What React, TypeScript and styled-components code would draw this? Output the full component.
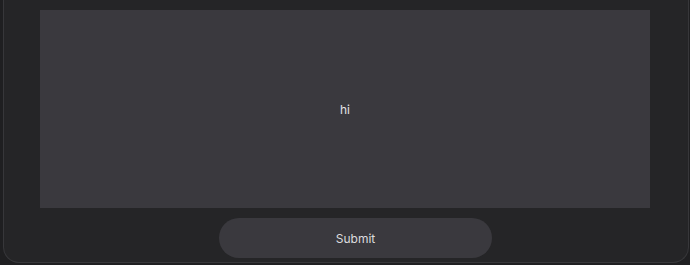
import React from "react";
import styled, { createGlobalStyle } from "styled-components";

const GlobalStyle = createGlobalStyle`
  html, body {
    margin: 0;
    padding: 0;
    background: #1f1f21;
    font-family: "Inter", "Noto Sans", sans-serif;
  }
`;

const Page = styled.div`
  width: 690px;
  height: 265px;
  overflow: hidden;
  padding: 0 1px 2px 3px;
  box-sizing: border-box;
`;

const Card = styled.div`
  background: #252527;
  border: 1px solid #37373a;
  border-top: none;
  border-radius: 0 0 16px 16px;
  padding: 10px 38px 6px 36px;
  height: 263px;
  box-sizing: border-box;
  display: flex;
  flex-direction: column;
  gap: 10px;
`;

const MessageBox = styled.div`
  height: 198px;
  flex-shrink: 0;
  background: #3a393e;
  display: flex;
  align-items: center;
  justify-content: center;
  color: #e4e4e6;
  font-size: 12px;
`;

const SubmitButton = styled.button`
  align-self: flex-start;
  flex-shrink: 0;
  margin-left: 179px;
  width: 273px;
  height: 40px;
  border: none;
  border-radius: 20px;
  background: #3a393e;
  color: #dcdcde;
  font-family: "Inter", "Noto Sans", sans-serif;
  font-size: 12px;
  cursor: pointer;
`;

export default function App() {
  return (
    <>
      <GlobalStyle />
      <Page>
        <Card>
          <MessageBox>hi</MessageBox>
          <SubmitButton type="submit">Submit</SubmitButton>
        </Card>
      </Page>
    </>
  );
}
